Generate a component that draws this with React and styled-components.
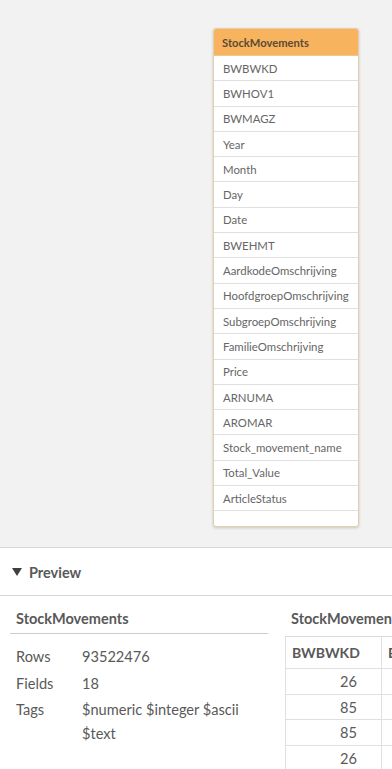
import styled, { createGlobalStyle } from "styled-components";

const GlobalStyle = createGlobalStyle`
  html, body {
    margin: 0;
    padding: 0;
    background: #ffffff;
    font-family: Lato, "Noto Sans", sans-serif;
    color: #595959;
  }
`;

// Velden van de tabel
const fields = [
  "BWBWKD",
  "BWHOV1",
  "BWMAGZ",
  "Year",
  "Month",
  "Day",
  "Date",
  "BWEHMT",
  "AardkodeOmschrijving",
  "HoofdgroepOmschrijving",
  "SubgroepOmschrijving",
  "FamilieOmschrijving",
  "Price",
  "ARNUMA",
  "AROMAR",
  "Stock_movement_name",
  "Total_Value",
  "ArticleStatus",
];

const previewRows = [26, 85, 85, 26];

const Page = styled.div`
  width: 392px;
  height: 769px;
  overflow: hidden;
  display: flex;
  flex-direction: column;
`;

const Canvas = styled.div`
  height: 548px;
  flex-shrink: 0;
  box-sizing: border-box;
  background: #f2f2f2;
  border-bottom: 1px solid #d6d6d6;
  padding: 28px 0 0 213px;
`;

const TableCard = styled.div`
  width: 146px;
  box-sizing: border-box;
  background: #fff;
  border: 1px solid #e3cfa8;
  border-radius: 3px;
  box-shadow: 0 1px 3px rgba(0, 0, 0, 0.18);
  padding-bottom: 15px;
  overflow: hidden;
`;

const CardHeader = styled.div`
  height: 27px;
  background: #f8b35e;
  display: flex;
  align-items: center;
  padding-left: 8px;
  font-size: 11.2px;
  font-weight: 700;
  color: #5a4a35;
  border-bottom: 1px solid #e8c890;
  box-sizing: border-box;
`;

const FieldRow = styled.div`
  height: 25.3px;
  box-sizing: border-box;
  border-bottom: 1px solid #e0e0e0;
  display: flex;
  align-items: center;
  padding-left: 9px;
  font-size: 11.4px;
  color: #666;
  white-space: nowrap;
`;

const Panel = styled.div`
  flex: 1;
  min-height: 0;
  background: #fff;
  display: flex;
  flex-direction: column;
`;

const PreviewBar = styled.div`
  height: 48px;
  flex-shrink: 0;
  box-sizing: border-box;
  border-bottom: 1px solid #d6d6d6;
  display: flex;
  align-items: center;
  gap: 7px;
  padding: 1px 0 0 12px;
  font-size: 14.5px;
  font-weight: 700;
  color: #595959;
`;

const Triangle = styled.span`
  width: 0;
  height: 0;
  border-left: 5px solid transparent;
  border-right: 5px solid transparent;
  border-top: 8px solid #404040;
`;

const PreviewBody = styled.div`
  display: flex;
  gap: 17px;
  padding-left: 10px;
  overflow: hidden;
`;

const InfoColumn = styled.div`
  width: 258px;
  flex-shrink: 0;
`;

const SectionTitle = styled.div`
  height: 38px;
  box-sizing: border-box;
  display: flex;
  align-items: center;
  padding: 7px 0 0 6px;
  font-size: 14.5px;
  font-weight: 700;
  color: #595959;
  white-space: nowrap;
  border-bottom: ${(p) => (p.$underline ? "1px solid #cccccc" : "none")};
`;

const InfoList = styled.div`
  display: grid;
  grid-template-columns: 66px 1fr;
  row-gap: 3px;
  padding: 11px 0 0 6px;
  font-size: 14.6px;
  line-height: 23.5px;
  color: #595959;
`;

const DataColumn = styled.div`
  flex-shrink: 0;
`;

const DataTable = styled.table`
  border-collapse: collapse;
  margin-top: 2px;
  font-size: 14.6px;
  color: #595959;
`;

const HeadCell = styled.th`
  width: 96px;
  height: 32px;
  box-sizing: border-box;
  border: 1px solid #e0e0e0;
  border-top: 1px solid #d9d9d9;
  text-align: left;
  padding-left: 6px;
  font-weight: 700;
  font-size: 14px;
`;

const Cell = styled.td`
  height: 25.7px;
  box-sizing: border-box;
  border: 1px solid #e0e0e0;
  text-align: ${(p) => (p.$num ? "right" : "left")};
  padding-right: 24px;
  padding-left: 6px;
`;

export default function App() {
  return (
    <Page>
      <GlobalStyle />
      <Canvas>
        <TableCard>
          <CardHeader>StockMovements</CardHeader>
          {fields.map((f) => (
            <FieldRow key={f}>{f}</FieldRow>
          ))}
        </TableCard>
      </Canvas>
      <Panel>
        <PreviewBar>
          <Triangle />
          Preview
        </PreviewBar>
        <PreviewBody>
          <InfoColumn>
            <SectionTitle $underline>StockMovements</SectionTitle>
            <InfoList>
              <span>Rows</span>
              <span>93522476</span>
              <span>Fields</span>
              <span>18</span>
              <span>Tags</span>
              <span>$numeric $integer $ascii $text</span>
            </InfoList>
          </InfoColumn>
          <DataColumn>
            <SectionTitle>StockMovements</SectionTitle>
            <DataTable>
              <thead>
                <tr>
                  <HeadCell>BWBWKD</HeadCell>
                  <HeadCell>BWHOV1</HeadCell>
                </tr>
              </thead>
              <tbody>
                {previewRows.map((v, i) => (
                  <tr key={i}>
                    <Cell $num>{v}</Cell>
                    <Cell $num>1</Cell>
                  </tr>
                ))}
              </tbody>
            </DataTable>
          </DataColumn>
        </PreviewBody>
      </Panel>
    </Page>
  );
}
